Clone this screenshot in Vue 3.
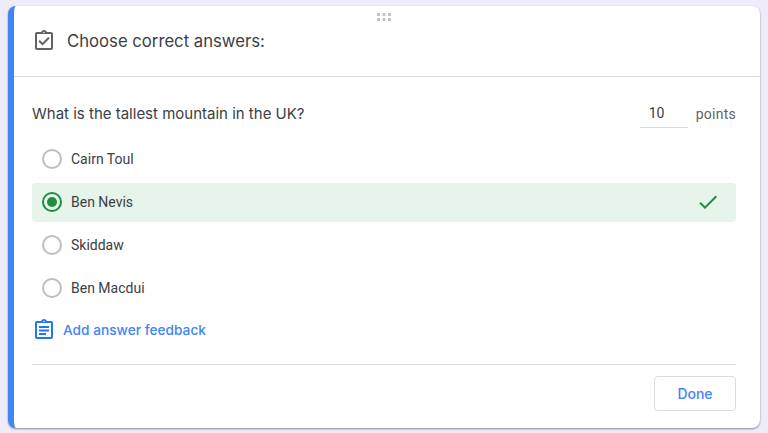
<template>
  <div class="page">
    <div class="card">
      <div class="drag">
        <svg width="16" height="10" viewBox="0 0 16 10">
          <g fill="#c4c4c4">
            <rect v-for="d in dots" :key="d.x + '-' + d.y" :x="d.x" :y="d.y" width="3" height="3" />
          </g>
        </svg>
      </div>
      <div class="header">
        <svg class="head-icon" width="24" height="24" viewBox="0 0 24 24">
          <path fill="#5f6368" d="M19 3h-4.18C14.4 1.84 13.3 1 12 1s-2.4.84-2.82 2H5c-1.1 0-2 .9-2 2v14c0 1.1.9 2 2 2h14c1.1 0 2-.9 2-2V5c0-1.1-.9-2-2-2zm-7-.25c.41 0 .75.34.75.75s-.34.75-.75.75-.75-.34-.75-.75.34-.75.75-.75zM19 19H5V5h14v14z" />
          <path fill="#5f6368" d="M17.6 9.4l-1.4-1.4-5.7 5.7-2.7-2.7-1.4 1.4 4.1 4.1z" />
        </svg>
        <span class="head-title">Choose correct answers:</span>
      </div>
      <div class="body">
        <div class="question">
          <span class="q-text">What is the tallest mountain in the UK?</span>
          <span class="points-box">10</span>
          <span class="points-label">points</span>
        </div>
        <div class="options">
          <div v-for="o in options" :key="o.label" :class="['option', { correct: o.correct }]">
            <span class="radio"><span class="radio-dot"></span></span>
            <span class="opt-label">{{ o.label }}</span>
            <svg v-if="o.correct" class="check" width="24" height="24" viewBox="0 0 24 24">
              <path fill="#1e8e3e" d="M9 16.2 4.8 12l-1.4 1.4L9 19 21 7l-1.4-1.4z" />
            </svg>
          </div>
        </div>
        <div class="feedback">
          <svg width="24" height="24" viewBox="0 0 24 24">
            <path fill="#1f78ee" d="M19 3h-4.18C14.4 1.84 13.3 1 12 1s-2.4.84-2.82 2H5c-1.1 0-2 .9-2 2v14c0 1.1.9 2 2 2h14c1.1 0 2-.9 2-2V5c0-1.1-.9-2-2-2zm-7-.25c.41 0 .75.34.75.75s-.34.75-.75.75-.75-.34-.75-.75.34-.75.75-.75zM19 19H5V5h14v14z" />
            <path fill="#1f78ee" d="M7 8h10v2H7zM7 11.5h10v2H7zM7 15h7v2H7z" />
          </svg>
          <span>Add answer feedback</span>
        </div>
        <div class="footer">
          <button class="done">Done</button>
        </div>
      </div>
    </div>
  </div>
</template>

<script setup>
const dots = []
for (const y of [1, 6]) {
  for (const x of [1, 6.5, 12]) dots.push({ x, y })
}

const options = [
  { label: 'Cairn Toul', correct: false },
  { label: 'Ben Nevis', correct: true },
  { label: 'Skiddaw', correct: false },
  { label: 'Ben Macdui', correct: false },
]
</script>

<style>
html,
body {
  margin: 0;
  background: #f0ebf8;
}
</style>

<style scoped>
.page {
  width: 768px;
  height: 433px;
  padding: 6px 8px 5px;
  box-sizing: border-box;
  overflow: hidden;
  font-family: Roboto, sans-serif;
  color: #3c4043;
}

.card {
  position: relative;
  height: 100%;
  box-sizing: border-box;
  background: #fff;
  border-left: 6px solid #4285f4;
  border-radius: 8px;
  box-shadow: 0 1px 2px rgba(60, 64, 67, 0.6);
}

.drag {
  position: absolute;
  top: 6px;
  left: 0;
  right: 6px;
  display: flex;
  justify-content: center;
  line-height: 0;
}

.header {
  height: 71px;
  box-sizing: border-box;
  display: flex;
  align-items: center;
  padding-left: 18px;
  border-bottom: 1px solid #dadce0;
}

.head-icon {
  margin-right: 11px;
}

.head-title {
  font-family: Inter, sans-serif;
  font-size: 16.7px;
  color: #3c4043;
}

.body {
  padding: 0 24px 0 18px;
}

.question {
  height: 57px;
  box-sizing: border-box;
  padding-top: 12px;
  display: flex;
  align-items: flex-start;
}

.q-text {
  flex: 1;
  line-height: 50px;
  font-family: Inter, sans-serif;
  font-size: 15px;
}

.points-box {
  width: 48px;
  height: 39px;
  margin-right: 8px;
  padding-left: 9px;
  box-sizing: border-box;
  border-bottom: 1px solid #dadce0;
  font-size: 14px;
  line-height: 49px;
}

.points-label {
  font-size: 14px;
  line-height: 50px;
  letter-spacing: 0.25px;
  color: #5f6368;
}

.options {
  display: flex;
  flex-direction: column;
  gap: 4px;
  padding-top: 6px;
}

.option {
  height: 39px;
  box-sizing: border-box;
  display: flex;
  align-items: center;
  padding: 0 16px 1px 10px;
  border-radius: 4px;
  font-size: 14px;
}

.correct {
  background: #e6f4ea;
}

.radio {
  width: 20px;
  height: 20px;
  box-sizing: border-box;
  border: 2px solid #bdbdbd;
  border-radius: 50%;
  display: flex;
  align-items: center;
  justify-content: center;
  margin-right: 9px;
}

.radio-dot {
  display: none;
  width: 10px;
  height: 10px;
  border-radius: 50%;
  background: #1e8e3e;
}

.correct .radio {
  border-color: #1e8e3e;
}

.correct .radio-dot {
  display: block;
}

.opt-label {
  flex: 1;
}

.feedback {
  display: flex;
  align-items: center;
  height: 24px;
  margin-top: 10px;
  color: #4285f4;
  font-size: 13.7px;
  font-weight: 500;
  font-family: Inter, sans-serif;
  gap: 7px;
}

.footer {
  margin-top: 22px;
  border-top: 1px solid #e0e0e0;
  padding-top: 11px;
  display: flex;
  justify-content: flex-end;
}

.done {
  width: 82px;
  height: 35px;
  background: #fff;
  border: 1px solid #dadce0;
  border-radius: 4px;
  color: #4285f4;
  font-family: Inter, sans-serif;
  font-size: 14px;
  font-weight: 500;
}
</style>
